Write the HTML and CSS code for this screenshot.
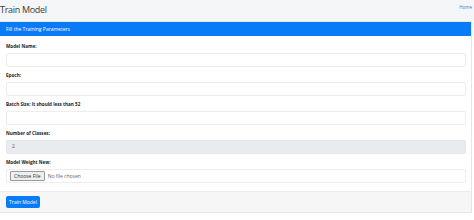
FILE: index.html
```html
<!DOCTYPE html>
<html>
<head>
  <meta charset='UTF-8'>
  <title>Train Model</title>
  <link rel="stylesheet" href="styles.css">
</head>
<body>
  <div class='top'>
    <span class='brand'>Train Model</span>
    <a class='home' href='#'>Home</a>
  </div>

  <form class='card'>
    <div class='card-head'>Fill the Training Parameters</div>
    <div class='card-body'>
      <div class='grp'>
        <label>Model Name:</label>
        <input class='fld' type='text'>
      </div>
      <div class='grp'>
        <label>Epoch:</label>
        <input class='fld' type='text'>
      </div>
      <div class='grp'>
        <label>Batch Size: It should less than 52</label>
        <input class='fld' type='text'>
      </div>
      <div class='grp'>
        <label>Number of Classes:</label>
        <div class='fld off'>2</div>
      </div>
      <div class='grp'>
        <label>Model Weight New:</label>
        <div class='fld file'><span class='pick'>Choose File</span><span class='none'>No file chosen</span></div>
      </div>
    </div>
    <div class='card-foot'>
      <button type='button' class='btn'>Train Model</button>
    </div>
  </form>
</body>
</html>
```

FILE: styles.css
```css
body{margin:0;background:#fff;font-family:"Open Sans",sans-serif;color:#212529;width:474px;height:220px;overflow:hidden;}
.top{height:21px;background:#f5f6f8;display:flex;justify-content:space-between;align-items:center;padding-right:2px;}
.brand{font-size:9px;color:#3a3a3a;letter-spacing:-0.3px;margin-top:-3px;}
.home{font-size:4.5px;color:#3b7dd8;text-decoration:none;margin-top:-8px;}
.card{width:471px;border:1px solid #e6e6e6;border-left:none;margin:0;}
.card-head{height:14px;background:#0a7bf7;color:#fff;font-size:5px;line-height:14px;padding-left:6px;}
.card-body{padding:7px 6px 3px 6px;}
.grp{margin-bottom:5.5px;}
.grp label{display:block;font-size:4.6px;font-weight:bold;line-height:7px;margin-bottom:3px;color:#222;}
.fld{display:block;box-sizing:border-box;width:460px;height:13.5px;border:1px solid #ededed;border-radius:2px;background:#fff;font-family:inherit;}
.off{background:#e9ecef;border-color:#e3e6ea;font-size:5px;line-height:11.5px;padding-left:5px;color:#555;}
.file{display:flex;align-items:center;padding-left:3px;font-size:5px;}
.pick{border:1px solid #999;background:#efefef;border-radius:1px;padding:1px 3px;color:#333;}
.none{margin-left:3px;color:#666;}
.card-foot{display:flex;align-items:center;background:#f6f6f6;border-top:1px solid #ececec;padding:0 6px;height:20px;}
.btn{background:#0a7bf7;color:#fff;border:none;border-radius:2px;height:12px;width:34px;font-size:5px;font-family:inherit;padding:0;}
```
